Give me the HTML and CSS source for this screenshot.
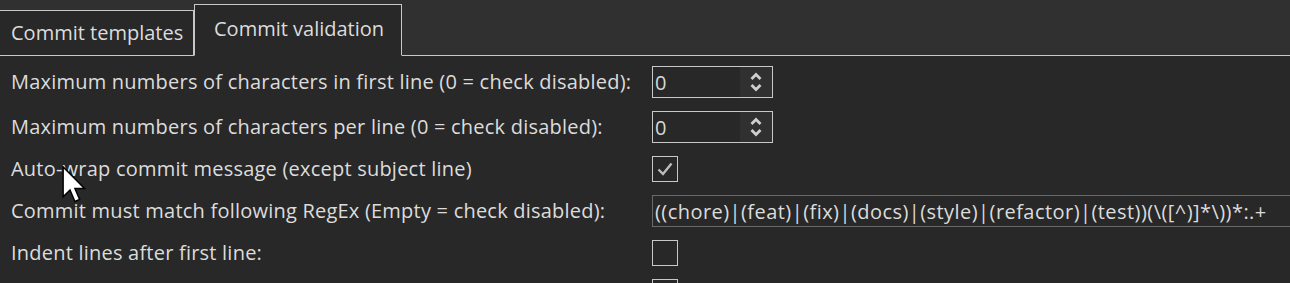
FILE: index.html
```html
<!DOCTYPE html>
<html>
<head>
<meta charset="utf-8">
<link rel="stylesheet" href="styles.css">
</head>
<body>
<div class="tabbar">
  <div class="tab">Commit templates</div>
  <div class="tab active">Commit validation</div>
</div>
<div class="form">
  <div class="label">Maximum numbers of characters in first line (0 = check disabled):</div>
  <div class="spin"><span class="spin-value">0</span><span class="spin-buttons">
    <svg width="12" height="24" viewBox="0 0 12 24"><path d="M1.5 9 L6 4.5 L10.5 9 M1.5 15 L6 19.5 L10.5 15" fill="none" stroke="#cfcfcf" stroke-width="2.8"/></svg>
  </span></div>

  <div class="label">Maximum numbers of characters per line (0 = check disabled):</div>
  <div class="spin"><span class="spin-value">0</span><span class="spin-buttons">
    <svg width="12" height="24" viewBox="0 0 12 24"><path d="M1.5 9 L6 4.5 L10.5 9 M1.5 15 L6 19.5 L10.5 15" fill="none" stroke="#cfcfcf" stroke-width="2.8"/></svg>
  </span></div>

  <div class="label">Auto-wrap commit message (except subject line)</div>
  <div class="check"><svg width="20" height="20" viewBox="0 0 20 20"><path d="M3.5 10.5 L8 15 L16.5 4.5" fill="none" stroke="#bdbdbd" stroke-width="2.4"/></svg></div>

  <div class="label">Commit must match following RegEx (Empty = check disabled):</div>
  <div class="textbox">((chore)|(feat)|(fix)|(docs)|(style)|(refactor)|(test))(\([^)]*\))*:.+</div>

  <div class="label">Indent lines after first line:</div>
  <div class="check"></div>

  <div class="label"></div>
  <div class="check"></div>
</div>
<svg class="cursor" width="24" height="38" viewBox="0 0 13 21"><path d="M0.5 0.5 L0.5 17 L4.3 13.3 L7 19.6 L9.6 18.5 L7 12.4 L12.3 12.4 Z" fill="#ffffff" stroke="#000000" stroke-width="0.8" stroke-linejoin="miter"/></svg>
</body>
</html>
```

FILE: styles.css
```css
html, body {
  margin: 0;
  padding: 0;
}
body {
  background: #282828;
  color: #dcdcdc;
  font-family: "Open Sans", "Noto Sans", sans-serif;
  font-size: 20px;
  width: 1290px;
  height: 283px;
  overflow: hidden;
  position: relative;
}
.tabbar {
  display: flex;
  align-items: flex-end;
  height: 55px;
  background: #303030;
  border-bottom: 1px solid #c8c8c8;
}
.tab {
  box-sizing: border-box;
  height: 46px;
  margin-bottom: -1px;
  padding: 0 0 1px 11px;
  width: 194px;
  display: flex;
  align-items: center;
  white-space: nowrap;
  background: #282828;
  border-top: 1px solid #c8c8c8;
  border-right: 1px solid #c8c8c8;
  border-bottom: 1px solid #c8c8c8;
}
.tab.active {
  height: 52px;
  width: 208px;
  padding: 0 0 3px 19px;
  border-left: 1px solid #c8c8c8;
  border-bottom: 1px solid #282828;
}
.form {
  display: grid;
  grid-template-columns: 641px 1fr;
  grid-auto-rows: auto;
  row-gap: 13px;
  align-items: center;
  padding: 10px 0 0 11px;
}
.label {
  white-space: nowrap;
  line-height: 24px;
  letter-spacing: 0.22px;
}
.spin {
  box-sizing: border-box;
  width: 121px;
  height: 32px;
  border: 1px solid #c8c8c8;
  display: flex;
  align-items: stretch;
}
.spin-value {
  flex: 1;
  padding-left: 2px;
  display: flex;
  align-items: center;
  color: #d8d8d8;
}
.spin-buttons {
  width: 32px;
  background: #303030;
  display: flex;
  align-items: center;
  justify-content: center;
}
.check {
  box-sizing: border-box;
  width: 26px;
  height: 26px;
  border: 1px solid #c8c8c8;
  display: flex;
  align-items: center;
  justify-content: center;
}
.textbox {
  box-sizing: border-box;
  height: 32px;
  margin-right: -10px;
  border: 1px solid #6a6a6a;
  border-right: none;
  padding-left: 2px;
  display: flex;
  align-items: center;
  white-space: nowrap;
  letter-spacing: 0.45px;
  color: #dcdcdc;
}
.cursor {
  position: absolute;
  left: 62px;
  top: 166px;
}
```
